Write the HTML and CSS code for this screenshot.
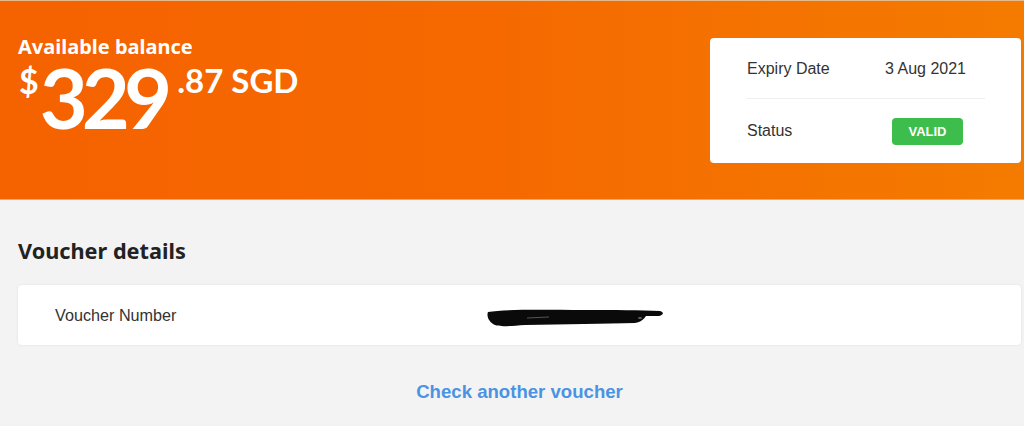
FILE: index.html
```html
<!DOCTYPE html>
<html lang="en">
<head>
<meta charset="utf-8">
<title>Voucher balance</title>
<link rel="stylesheet" href="styles.css">
</head>
<body>
<header class="hero">
  <div class="balance">
    <div class="balance-label">Available balance</div>
    <div class="amount">
      <span class="currency">$</span>
      <span class="whole">329</span>
      <span class="fraction">.87 SGD</span>
    </div>
  </div>
  <div class="summary">
    <div class="summary-row summary-row-top">
      <span class="summary-label">Expiry Date</span>
      <span class="summary-value">3 Aug 2021</span>
    </div>
    <div class="summary-row">
      <span class="summary-label">Status</span>
      <span class="summary-value"><span class="badge">VALID</span></span>
    </div>
  </div>
</header>
<main class="details">
  <h2 class="details-title">Voucher details</h2>
  <div class="detail-card">
    <span class="detail-label">Voucher Number</span>
    <span class="detail-value">
      <svg class="redacted" width="180" height="24" viewBox="0 0 180 24" aria-hidden="true">
        <path d="M3 7 C20 4 60 5 100 5 C130 5 155 5 175 6 C179 7 179 10 174 11 L161 11 C159 14 156 17 150 18 C120 19 80 19 40 20 C25 21 15 22 10 20 C5 18 1 12 3 7 Z" fill="#0a0a0a"/>
        <path d="M42 13 L64 12" stroke="#555" stroke-width="1" fill="none"/>
        <ellipse cx="155" cy="13" rx="2" ry="1" fill="#666"/>
      </svg>
    </span>
  </div>
  <a class="check-link" href="#">Check another voucher</a>
</main>
</body>
</html>
```

FILE: styles.css
```css
* { box-sizing: border-box; }

html, body {
  margin: 0;
  padding: 0;
}

body {
  background: #f3f3f3;
  font-family: "Liberation Sans", Arial, sans-serif;
  color: #333;
  width: 1024px;
  height: 426px;
  overflow: hidden;
  border-top: 1px solid #e6b98a;
}

/* Orange balance banner */
.hero {
  height: 199px;
  background: linear-gradient(90deg, #f56200 0%, #f56a00 50%, #f47b00 100%);
  display: flex;
  justify-content: space-between;
  align-items: flex-start;
  padding: 34px 3px 0 18px;
  border-bottom: 1px solid #f7a860;
}

.balance {
  color: #fff;
  font-family: Lato, "Noto Sans", sans-serif;
  font-weight: 700;
}

.balance-label {
  font-family: "Noto Sans", "Open Sans", sans-serif;
  font-size: 20px;
  line-height: 24px;
}

.amount {
  display: flex;
  align-items: flex-start;
  height: 80px;
}

.currency {
  font-size: 34px;
  line-height: 40px;
  margin: 2px 3px 0 1px;
}

.whole {
  font-size: 83px;
  line-height: 76px;
  letter-spacing: -6px;
  margin-left: -2px;
}

.fraction {
  font-size: 33px;
  line-height: 40px;
  margin-left: 11px;
  margin-top: 1px;
}

/* Expiry / status card */
.summary {
  width: 311px;
  height: 125px;
  margin-top: 3px;
  background: #fff;
  border-radius: 4px;
  padding: 0 36px 0 37px;
  display: flex;
  flex-direction: column;
}

.summary-row {
  display: flex;
  align-items: center;
  flex: 1;
  font-size: 16px;
  color: #333;
}

.summary-row-top {
  flex: 0 0 60px;
  padding-top: 2px;
}

.summary-row + .summary-row {
  border-top: 1px solid #eeeeee;
}

.summary-label {
  width: 138px;
}

.badge {
  display: inline-block;
  margin-left: 7px;
  width: 71px;
  height: 27px;
  line-height: 27px;
  text-align: center;
  background: #3dbd4c;
  color: #fff;
  border-radius: 4px;
  font-size: 13px;
  font-weight: 700;
}

/* Voucher details section */
.details {
  padding: 0 3px 0 18px;
}

.details-title {
  margin: 37px 0 0;
  font-family: "Noto Sans", "Open Sans", sans-serif;
  font-size: 21.7px;
  line-height: 28px;
  font-weight: 700;
  color: #222;
}

.detail-card {
  margin-top: 20px;
  height: 60px;
  background: #fff;
  border-radius: 4px;
  box-shadow: 0 0 3px rgba(0, 0, 0, 0.08);
  display: flex;
  align-items: center;
  padding: 1px 0 0 37px;
  font-size: 16.2px;
  color: #333;
}

.detail-label {
  width: 430px;
}

.redacted {
  display: block;
  margin-top: 2px;
}

.check-link {
  display: block;
  margin-top: 36px;
  text-align: center;
  font-size: 18.6px;
  font-weight: 700;
  color: #4b93e2;
  text-decoration: none;
}
```
